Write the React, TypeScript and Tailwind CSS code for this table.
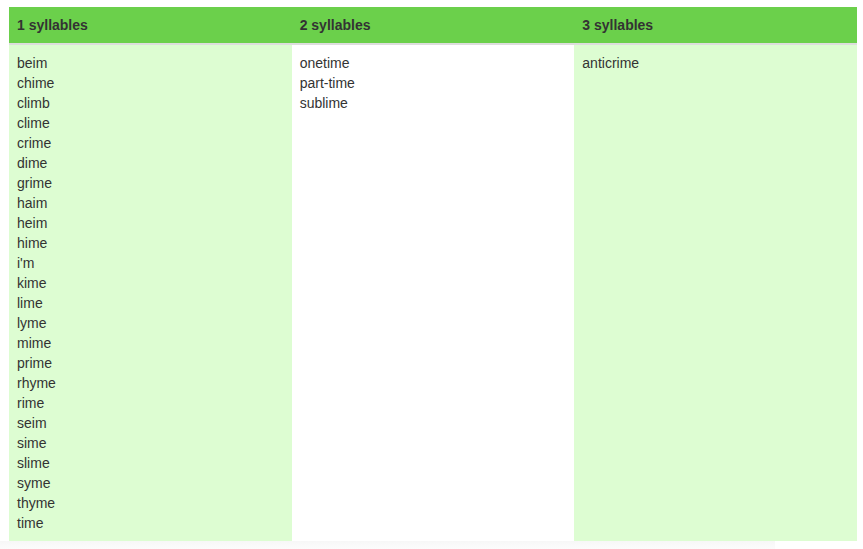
import React from "react";

const columns = [
  {
    title: "1 syllables",
    words: [
      "beim", "chime", "climb", "clime", "crime", "dime", "grime", "haim", "heim", "hime",
      "i'm", "kime", "lime", "lyme", "mime", "prime", "rhyme", "rime", "seim", "sime",
      "slime", "syme", "thyme", "time",
    ],
    shaded: true,
  },
  { title: "2 syllables", words: ["onetime", "part-time", "sublime"], shaded: false },
  { title: "3 syllables", words: ["anticrime"], shaded: true },
];

export default function App() {
  return (
    <div className="min-h-screen bg-white pt-[7px] text-[#333] font-['Liberation_Sans',Arial,sans-serif]">
      <div className="grid grid-cols-3 ml-[9px] mr-[6px]">
        {columns.map((c) => (
          <div key={c.title} className="h-9 bg-[#6bd04b] px-2 flex items-center text-[14px] font-bold border-b-2 border-[#dddddd] box-content">
            {c.title}
          </div>
        ))}
        {columns.map((c) => (
          <div key={c.title + "-body"} className={`${c.shaded ? "bg-[#ddfdd2]" : "bg-white"} px-2 py-2`}>
            {c.words.map((w) => (
              <div key={w} className="text-[14px] leading-5">
                {w}
              </div>
            ))}
          </div>
        ))}
      </div>
      <div className="h-2 w-[775px] bg-gradient-to-b from-[#f7f7f7] to-[#fcfcfc]" />
    </div>
  );
}
